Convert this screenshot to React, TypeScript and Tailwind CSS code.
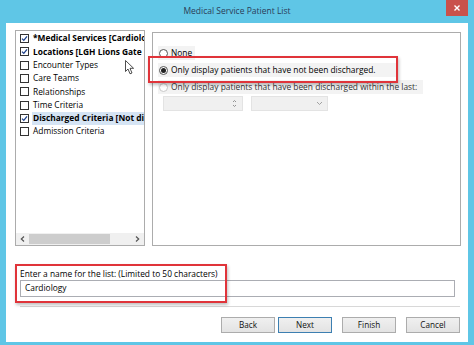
import type { ReactNode } from 'react';

const FONT = "font-['Open_Sans','Noto_Sans',sans-serif]";

const criteria = [
  { label: '*Medical Services [Cardiology]', checked: true, bold: true },
  { label: 'Locations [LGH Lions Gate Hospital]', checked: true, bold: true },
  { label: 'Encounter Types', checked: false, bold: false },
  { label: 'Care Teams', checked: false, bold: false },
  { label: 'Relationships', checked: false, bold: false },
  { label: 'Time Criteria', checked: false, bold: false },
  { label: 'Discharged Criteria [Not discharged]', checked: true, bold: true, selected: true },
  { label: 'Admission Criteria', checked: false, bold: false },
];

function CheckBox({ checked }: { checked: boolean }) {
  return (
    <span className="w-[9px] h-[9px] shrink-0 border border-[#333] bg-white flex items-center justify-center">
      {checked && (
        <svg width="7" height="7" viewBox="0 0 7 7">
          <path d="M1 3.6 L2.8 5.4 L6 1.4" fill="none" stroke="#1c3f8a" strokeWidth="1.3" />
        </svg>
      )}
    </span>
  );
}

function Radio({ checked, disabled }: { checked?: boolean; disabled?: boolean }) {
  return (
    <span
      className={`w-[9px] h-[9px] shrink-0 rounded-full border bg-white flex items-center justify-center ${
        disabled ? 'border-[#c8c8c8]' : 'border-[#555]'
      }`}
    >
      {checked && <span className="w-[5px] h-[5px] rounded-full bg-[#222]" />}
    </span>
  );
}

function Button({ children, focused }: { children: ReactNode; focused?: boolean }) {
  return (
    <button
      className={`w-[54px] h-[16px] text-[8.2px] text-[#111] bg-gradient-to-b from-[#f0f0f0] to-[#e3e3e3] border ${
        focused ? 'border-[#3c7fb1]' : 'border-[#acacac]'
      } flex items-center justify-center`}
    >
      {children}
    </button>
  );
}

export default function App() {
  return (
    <div className={`w-[474px] h-[345px] bg-[#5fc6e6] flex flex-col ${FONT} text-[8.4px] text-black overflow-hidden`}>
      {/* Title bar */}
      <div className="relative h-[23px] shrink-0 flex items-center justify-center">
        <span className="text-[8.5px] text-[#2b3c58] -mt-[1px]">Medical Service Patient List</span>
        <div className="absolute right-[6px] top-0 w-[22px] h-[16px] bg-[#c9514c] flex items-center justify-center">
          <svg width="6" height="6" viewBox="0 0 6 6">
            <path d="M0.5 0.5 L5.5 5.5 M5.5 0.5 L0.5 5.5" stroke="white" strokeWidth="1.4" />
          </svg>
        </div>
      </div>

      {/* Dialog body */}
      <div className="relative flex-1 mx-[6px] mb-[3px] bg-white flex flex-col">
        <div className="flex gap-[7px] pt-[7px] pl-[9px] pr-[7px]">
          {/* Criteria list */}
          <div className="w-[130px] h-[216px] border border-[#acacac] bg-white flex flex-col overflow-hidden">
            <div className="flex-1 pt-[1px]">
              {criteria.map((c) => (
                <div key={c.label} className="h-[13.3px] flex items-center pl-[4px]">
                  <CheckBox checked={c.checked} />
                  <span
                    className={`ml-[3px] flex-1 h-full flex items-center whitespace-nowrap overflow-hidden pl-[1px] ${
                      c.bold ? 'font-bold' : ''
                    } ${c.selected ? 'bg-[#d5e4f4]' : ''}`}
                  >
                    {c.label}
                  </span>
                </div>
              ))}
            </div>
            {/* Horizontal scrollbar */}
            <div className="h-[12px] bg-[#f0f0f0] flex items-center">
              <span className="w-[13px] flex items-center justify-center">
                <svg width="5" height="6" viewBox="0 0 5 6">
                  <path d="M4 0.5 L1.3 3 L4 5.5" fill="none" stroke="#555" strokeWidth="1.2" />
                </svg>
              </span>
              <span className="w-[81px] h-[10px] bg-[#cdcdcd]" />
              <span className="flex-1" />
              <span className="w-[13px] flex items-center justify-center">
                <svg width="5" height="6" viewBox="0 0 5 6">
                  <path d="M1 0.5 L3.7 3 L1 5.5" fill="none" stroke="#555" strokeWidth="1.2" />
                </svg>
              </span>
            </div>
          </div>

          {/* Options panel */}
          <div className="flex-1 h-[214px] mt-[2px] border border-[#acacac] bg-white flex flex-col pt-[13px] pl-[5px] gap-[3px]">
            <div className="self-start h-[14px] bg-[#f3f3f3] flex items-center pl-[1px] pr-[3px]">
              <Radio />
              <span className="ml-[3px]">None</span>
            </div>
            <div className="self-start h-[14px] bg-[#f3f3f3] flex items-center pl-[1px] pr-[20px]">
              <Radio checked />
              <span className="ml-[3px]">Only display patients that have not been discharged.</span>
            </div>
            <div className="self-start h-[14px] bg-[#f3f3f3] flex items-center pl-[1px] pr-[6px] text-[#333]">
              <Radio disabled />
              <span className="ml-[3px]">Only display patients that have been discharged within the last:</span>
            </div>
            <div className="flex items-center gap-[8px] pl-[5px] mt-[-1px]">
              <div className="w-[80px] h-[15px] bg-[#f0f0f0] border border-[#e3e3e3] flex items-center justify-end pr-[5px]">
                <svg width="5" height="9" viewBox="0 0 5 9">
                  <path d="M1 3 L2.5 1.5 L4 3 M1 6 L2.5 7.5 L4 6" fill="none" stroke="#888" strokeWidth="0.9" />
                </svg>
              </div>
              <div className="w-[77px] h-[15px] bg-[#f0f0f0] border border-[#e3e3e3] flex items-center justify-end pr-[4px]">
                <svg width="7" height="5" viewBox="0 0 7 5">
                  <path d="M1 1 L3.5 3.5 L6 1" fill="none" stroke="#999" strokeWidth="0.9" />
                </svg>
              </div>
            </div>
          </div>
        </div>

        {/* Name input */}
        <div className="pl-[14px] pr-[13px] mt-[22px]">
          <div className="h-[12px] flex items-center">Enter a name for the list: (Limited to 50 characters)</div>
          <div className="h-[17px] border border-[#abadb3] flex items-center pl-[4px]">Cardiology</div>
        </div>

        <div className="mx-[14px] mr-[8px] mt-[9px] h-[2px] border-t border-[#d8d8d8] border-b border-b-white" />

        <div className="flex justify-end gap-[10px] pr-[8px] mt-[9px]">
          <div className="flex gap-[3px]">
            <Button>Back</Button>
            <Button focused>Next</Button>
          </div>
          <Button>Finish</Button>
          <Button>Cancel</Button>
        </div>

        {/* Annotation boxes */}
        <div className="absolute left-[142px] top-[33px] w-[250px] h-[27px] border-2 border-[#e0343a] shadow-[1px_2px_3px_rgba(0,0,0,0.25)]" />
        <div className="absolute left-[9px] top-[241px] w-[212px] h-[39px] border-2 border-[#e0343a] shadow-[1px_2px_3px_rgba(0,0,0,0.25)]" />

        {/* Mouse pointer */}
        <svg className="absolute left-[119px] top-[37px]" width="10" height="15" viewBox="0 0 10 15">
          <path d="M0.5 0.5 L0.5 11.5 L3 9 L5 13.8 L7 13 L5 8.3 L8.6 8.3 Z" fill="white" stroke="#222" strokeWidth="0.8" strokeLinejoin="round" />
        </svg>
      </div>
    </div>
  );
}
